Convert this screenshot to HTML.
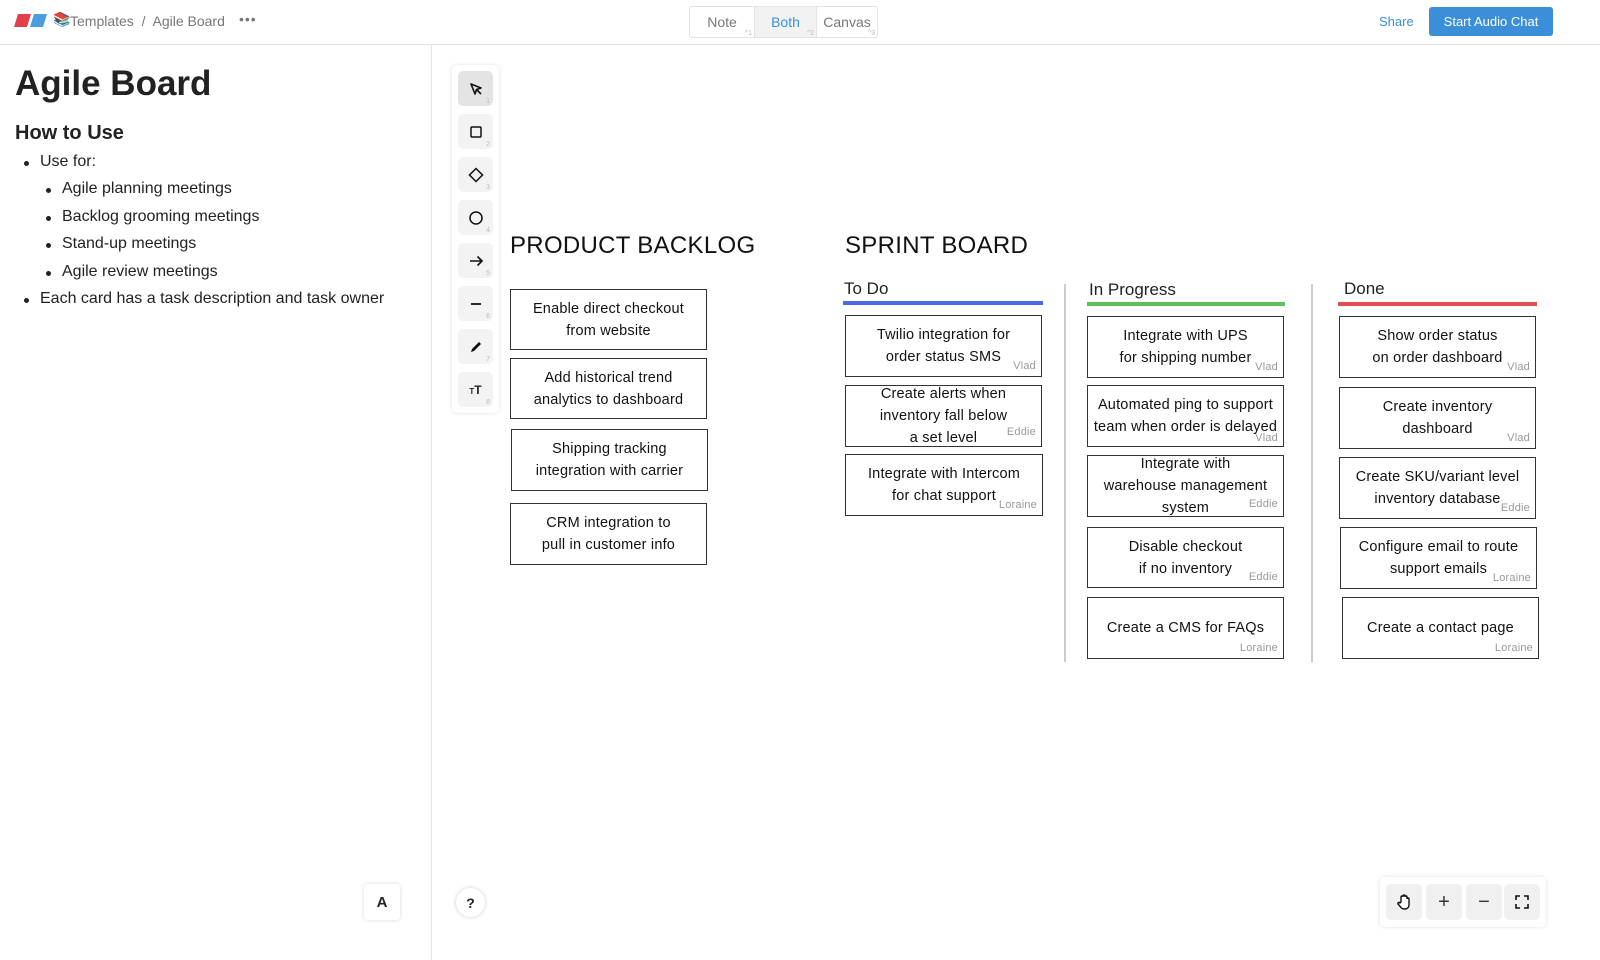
<!DOCTYPE html>
<html><head><meta charset="utf-8"><style>
*{box-sizing:border-box;margin:0;padding:0}
body{width:1600px;height:960px;background:#fff;font-family:"Liberation Sans",sans-serif;position:relative;overflow:hidden;color:#222}
.a{position:absolute}
.card{position:absolute;border:1.5px solid #333;background:#fff;display:flex;align-items:center;justify-content:center;text-align:center;font-size:14.5px;line-height:22px;color:#111;letter-spacing:.2px}
.card i{position:absolute;right:5px;bottom:4px;font-style:normal;font-size:11px;color:#999;line-height:12px}
.tool{position:absolute;left:458px;width:35px;height:35px;border-radius:5px;background:#f3f3f3;display:flex;align-items:center;justify-content:center}
.tool b{position:absolute;right:3px;bottom:1px;font-size:7px;color:#bbb;font-weight:normal}
.zb{position:absolute;top:884px;width:36px;height:36px;border-radius:5px;background:#f0f0f0;display:flex;align-items:center;justify-content:center;font-size:20px;color:#333}
ul{list-style:none}
li{position:relative;font-size:16px;color:#222}
li:before{content:"";position:absolute;left:-16px;top:8px;width:5px;height:5px;border-radius:50%;background:#222}
</style></head><body>
<div class="a" style="left:0;top:44px;width:1600px;height:1px;background:#e3e3e3"></div>
<svg class="a" style="left:14px;top:14px" width="34" height="14"><polygon points="4,0 17,0 13,13 0,13" fill="#e0404a"/><polygon points="20,0 33,0 29,13 16,13" fill="#4a9ee0"/></svg>
<div class="a" style="left:53px;top:11px;font-size:14px">📚</div>
<div class="a" style="left:70px;top:13px;font-size:14px;color:#777">Templates &nbsp;/&nbsp; Agile Board</div>
<div class="a" style="left:239px;top:11px;font-size:14px;color:#777;letter-spacing:1px">•••</div>
<div class="a" style="left:689px;top:6px;width:189px;height:32px;border:1px solid #e3e3e3;border-radius:3px;display:flex;font-size:14px">
<div style="width:64px;display:flex;align-items:center;justify-content:center;color:#777;position:relative">Note<span style="position:absolute;right:2px;bottom:0;font-size:7px;color:#bbb">^1</span></div>
<div style="width:63px;display:flex;align-items:center;justify-content:center;color:#3a8fd8;background:#f2f2f2;border-left:1px solid #e3e3e3;border-right:1px solid #e3e3e3;position:relative">Both<span style="position:absolute;right:2px;bottom:0;font-size:7px;color:#bbb">^2</span></div>
<div style="flex:1;display:flex;align-items:center;justify-content:center;color:#777;position:relative">Canvas<span style="position:absolute;right:2px;bottom:0;font-size:7px;color:#bbb">^3</span></div></div>
<div class="a" style="left:1379px;top:14px;font-size:13px;color:#3a8fd8">Share</div>
<div class="a" style="left:1429px;top:7px;width:124px;height:29px;background:#3a8fd8;border-radius:3px;color:#fff;font-size:13px;display:flex;align-items:center;justify-content:center">Start Audio Chat</div>
<div class="a" style="left:431px;top:45px;width:1px;height:915px;background:#e3e3e3"></div>
<div class="a" style="left:15px;top:64px;font-size:35px;font-weight:bold;color:#222">Agile Board</div>
<div class="a" style="left:15px;top:122px;font-size:20px;font-weight:bold;color:#222">How to Use</div>
<ul class="a" style="left:40px;top:153px">
<li style="height:27px">Use for:</li>
<li style="margin-left:22px;height:27.5px">Agile planning meetings</li>
<li style="margin-left:22px;height:27.5px">Backlog grooming meetings</li>
<li style="margin-left:22px;height:27.5px">Stand-up meetings</li>
<li style="margin-left:22px;height:27.5px">Agile review meetings</li>
<li>Each card has a task description and task owner</li></ul>
<div class="a" style="left:364px;top:884px;width:36px;height:36px;border-radius:4px;background:#fff;box-shadow:0 0 4px rgba(0,0,0,.15);display:flex;align-items:center;justify-content:center;font-weight:bold;font-size:15px">A</div>
<div class="a" style="left:456px;top:888px;width:29px;height:29px;border-radius:50%;box-shadow:0 0 4px rgba(0,0,0,.2);display:flex;align-items:center;justify-content:center;font-weight:bold;font-size:14px">?</div>
<div class="a" style="left:452px;top:65px;width:47px;height:348px;border-radius:5px;box-shadow:0 0 4px rgba(0,0,0,.12)"></div>
<div class="tool" style="top:71px;background:#e4e4e4"><svg width="14" height="14" viewBox="0 0 14 14"><path d="M2 2 L12 6 L7.5 7.5 L6 12 Z M7.5 7.5 L12 12" fill="none" stroke="#111" stroke-width="1.6" stroke-linejoin="round"/></svg><b>1</b></div>
<div class="tool" style="top:114px"><svg width="14" height="14"><rect x="2" y="2" width="10" height="10" rx="1" fill="none" stroke="#111" stroke-width="1.5"/></svg><b>2</b></div>
<div class="tool" style="top:157px"><svg width="16" height="16"><path d="M8 1.5 L14.5 8 L8 14.5 L1.5 8Z" fill="none" stroke="#111" stroke-width="1.5"/></svg><b>3</b></div>
<div class="tool" style="top:200px"><svg width="16" height="16"><circle cx="8" cy="8" r="6" fill="none" stroke="#111" stroke-width="1.5"/></svg><b>4</b></div>
<div class="tool" style="top:243px"><svg width="16" height="16"><path d="M2 8 H14 M9.5 3.5 L14 8 L9.5 12.5" fill="none" stroke="#111" stroke-width="1.6"/></svg><b>5</b></div>
<div class="tool" style="top:286px"><svg width="16" height="16"><path d="M3 8 H13" stroke="#111" stroke-width="1.8"/></svg><b>6</b></div>
<div class="tool" style="top:329px"><svg width="16" height="16"><path d="M3 13 L4 10 L11 3 L13 5 L6 12 Z" fill="#111"/></svg><b>7</b></div>
<div class="tool" style="top:372px"><span style="font-weight:bold;font-size:12px"><span style="font-size:8px">T</span>T</span><b>8</b></div>
<div class="a" style="left:510px;top:232px;font-size:24px;letter-spacing:.3px;color:#111">PRODUCT BACKLOG</div>
<div class="a" style="left:845px;top:232px;font-size:24px;letter-spacing:.3px;color:#111">SPRINT BOARD</div>
<div class="a" style="left:844px;top:279px;font-size:17px">To Do</div>
<div class="a" style="left:843px;top:301px;width:200px;height:4px;background:#4a6ae8"></div>
<div class="a" style="left:1089px;top:280px;font-size:17px">In Progress</div>
<div class="a" style="left:1087px;top:302px;width:198px;height:4px;background:#5cc05c"></div>
<div class="a" style="left:1344px;top:279px;font-size:17px">Done</div>
<div class="a" style="left:1338px;top:302px;width:199px;height:4px;background:#e05050"></div>
<div class="a" style="left:1064px;top:284px;width:2px;height:378px;background:#ccc"></div>
<div class="a" style="left:1311px;top:284px;width:2px;height:378px;background:#ccc"></div>
<div class="card" style="left:510px;top:289px;width:197px;height:61px">Enable direct checkout<br>from website</div>
<div class="card" style="left:510px;top:358px;width:197px;height:61px">Add historical trend<br>analytics to dashboard</div>
<div class="card" style="left:511px;top:429px;width:197px;height:62px">Shipping tracking<br>integration with carrier</div>
<div class="card" style="left:510px;top:503px;width:197px;height:62px">CRM integration to<br>pull in customer info</div>
<div class="card" style="left:845px;top:315px;width:197px;height:62px">Twilio integration for<br>order status SMS<i>Vlad</i></div>
<div class="card" style="left:845px;top:385px;width:197px;height:62px">Create alerts when<br>inventory fall below<br>a set level<i style="bottom:8px">Eddie</i></div>
<div class="card" style="left:845px;top:454px;width:198px;height:62px">Integrate with Intercom<br>for chat support<i>Loraine</i></div>
<div class="card" style="left:1087px;top:316px;width:197px;height:62px">Integrate with UPS<br>for shipping number<i>Vlad</i></div>
<div class="card" style="left:1087px;top:385px;width:197px;height:62px">Automated ping to support<br>team when order is delayed<i style="bottom:2px">Vlad</i></div>
<div class="card" style="left:1087px;top:455px;width:197px;height:62px">Integrate with<br>warehouse management<br>system<i style="bottom:6px">Eddie</i></div>
<div class="card" style="left:1087px;top:527px;width:197px;height:61px">Disable checkout<br>if no inventory<i>Eddie</i></div>
<div class="card" style="left:1087px;top:597px;width:197px;height:62px">Create a CMS for FAQs<i>Loraine</i></div>
<div class="card" style="left:1339px;top:316px;width:197px;height:62px">Show order status<br>on order dashboard<i>Vlad</i></div>
<div class="card" style="left:1339px;top:387px;width:197px;height:62px">Create inventory<br>dashboard<i>Vlad</i></div>
<div class="card" style="left:1339px;top:457px;width:197px;height:62px">Create SKU/variant level<br>inventory database<i>Eddie</i></div>
<div class="card" style="left:1340px;top:527px;width:197px;height:62px">Configure email to route<br>support emails<i>Loraine</i></div>
<div class="card" style="left:1342px;top:597px;width:197px;height:62px">Create a contact page<i>Loraine</i></div>
<div class="a" style="left:1380px;top:877px;width:166px;height:50px;border-radius:5px;box-shadow:0 0 4px rgba(0,0,0,.12)"></div>
<div class="zb" style="left:1386px"><svg width="18" height="18" viewBox="0 0 18 18"><path d="M6 9 V4 a1 1 0 0 1 2 0 V3 a1 1 0 0 1 2 0 V4 a1 1 0 0 1 2 0 V6 a1 1 0 0 1 2 0 V12 a4 4 0 0 1 -4 4 H9 a4 4 0 0 1 -3 -1.5 L3 11 a1 1 0 0 1 2 -1 Z" fill="#fff" stroke="#111" stroke-width="1.4"/></svg></div>
<div class="zb" style="left:1426px">+</div>
<div class="zb" style="left:1466px">−</div>
<div class="zb" style="left:1504px"><svg width="14" height="14"><path d="M1 5V1H5M9 1H13V5M13 9V13H9M5 13H1V9" fill="none" stroke="#111" stroke-width="1.6"/></svg></div>
</body></html>
